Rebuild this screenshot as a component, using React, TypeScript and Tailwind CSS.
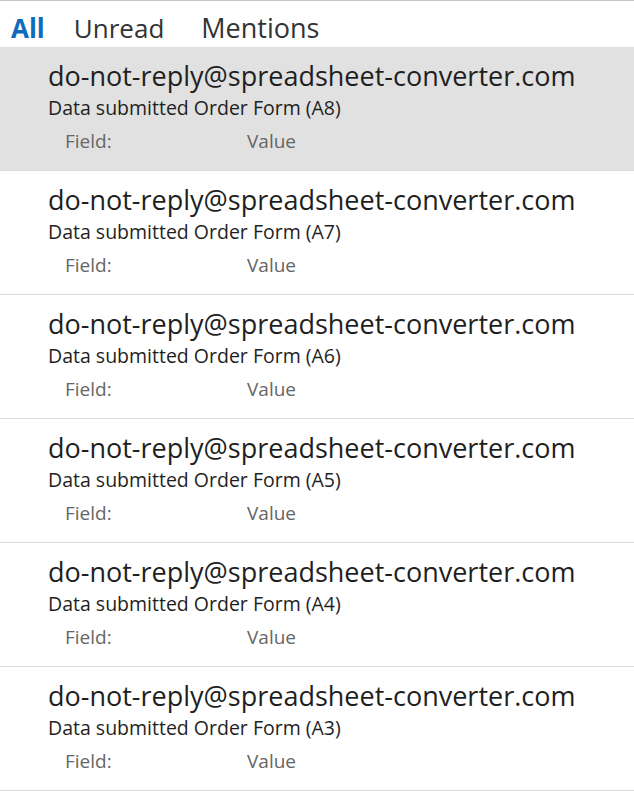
import React from "react";

const ITEMS = ["A8", "A7", "A6", "A5", "A4", "A3"];

function MessageRow({ code, selected }: { code: string; selected?: boolean }) {
  return (
    <div
      className={`h-[124px] border-b border-[#dcdcdc] pl-[48px] pt-[13px] ${
        selected ? "bg-[#e1e1e1]" : "bg-white"
      }`}
    >
      <div className="text-[27px] leading-[32px] text-[#1f1f1f] whitespace-nowrap">
        do-not-reply@spreadsheet-converter.com
      </div>
      <div className="mt-[4px] text-[19.5px] leading-[24px] text-[#1f1f1f] whitespace-nowrap">
        Data submitted Order Form ({code})
      </div>
      <div className="flex pl-[17px] pt-[9px] text-[19px] leading-[24px] text-[#666666]">
        <span className="w-[182px]">Field:</span>
        <span>Value</span>
      </div>
    </div>
  );
}

export default function App() {
  return (
    <div
      className="w-[634px] h-[798px] overflow-hidden bg-white border-t border-[#c4c8cc]"
      style={{ fontFamily: '"Open Sans", "Noto Sans", sans-serif' }}
    >
      <div className="flex items-end h-[46px] pl-[11px] pb-[3px] text-[26px] leading-[32px]">
        <span className="font-bold text-[#0f6cbd] mr-[29px]">All</span>
        <span className="text-[#333333] mr-[37px]">Unread</span>
        <span className="text-[#333333] text-[27px]">Mentions</span>
      </div>
      {ITEMS.map((c, i) => (
        <MessageRow key={c} code={c} selected={i === 0} />
      ))}
    </div>
  );
}
